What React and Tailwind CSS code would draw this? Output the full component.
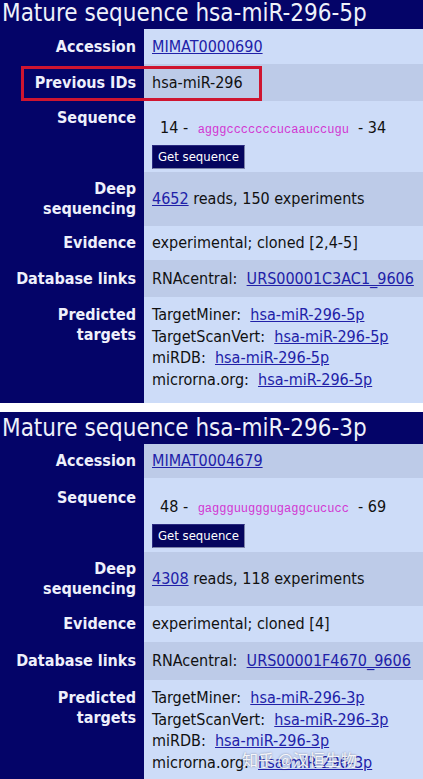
import React from "react";

const NAVY = "bg-[#040468]";

const Row = ({ label, dark, children, labelClass = "pt-2", valueClass = "py-2 items-center", boxed }) => {
  return (
    <div className="relative flex">
      <div className={`${NAVY} w-[144px] shrink-0 pr-2 text-right font-bold text-[#eef0fb] leading-[20px] ${labelClass}`}>
        {label}
      </div>
      <div className={`flex flex-1 pl-2 text-[#111] leading-[20px] ${dark ? "bg-[#bdcbe8]" : "bg-[#cddcf8]"} ${valueClass}`}>
        <div>{children}</div>
      </div>
      {boxed && (
        <div className="pointer-events-none absolute left-[21px] top-[2px] h-[35px] w-[241px] border-[3px] border-[#cf1530]" />
      )}
    </div>
  );
};

const A = ({ children }) => <a className="text-[#2121a8] underline">{children}</a>;

const SeqBlock = ({ start, seq, end }) => (
  <div className="flex flex-col items-start">
    <div className="pl-2 leading-[20px]">
      {start} -&nbsp;
      <span className="ml-[5px] font-['Liberation_Mono','Courier_New',monospace] text-[12px] text-[#d236d2]">{seq}</span>
      &nbsp; - {end}
    </div>
    <button className="mt-[5px] h-[24px] border border-[#7b82a8] border-t-[#2a2a80] border-l-[#2a2a80] bg-[#05055e] px-[5px] text-[13px] text-white leading-[20px]">
      Get sequence
    </button>
  </div>
);

const Targets = ({ name }) => (
  <div className="leading-[21.7px]">
    <div>TargetMiner:&nbsp; <A>{name}</A></div>
    <div>TargetScanVert:&nbsp; <A>{name}</A></div>
    <div>miRDB:&nbsp; <A>{name}</A></div>
    <div>microrna.org:&nbsp; <A>{name}</A></div>
  </div>
);

const Title = ({ children, className = "" }) => (
  <div className={`${NAVY} pl-[2px] text-[24px] text-[#eef1fa] ${className}`}>{children}</div>
);

export default function App() {
  return (
    <div className="relative h-[779px] w-[423px] overflow-hidden bg-white font-['DejaVu_Sans_Condensed','DejaVu_Sans',sans-serif] text-[16px]">
      <Title className="h-[29px] leading-[27px]">Mature sequence hsa-miR-296-5p</Title>
      <Row label="Accession" valueClass="py-[7.5px] items-center" labelClass="py-[7.5px]">
        <A>MIMAT0000690</A>
      </Row>
      <Row label="Previous IDs" dark boxed valueClass="py-[8.5px] items-center" labelClass="py-[8.5px]">
        hsa-miR-296
      </Row>
      <Row label="Sequence" labelClass="pt-[7px]" valueClass="pt-[17px] pb-[3px]">
        <SeqBlock start="14" seq="agggcccccccucaauccugu" end="34" />
      </Row>
      <Row label={<>Deep<br />sequencing</>} dark labelClass="py-[7px]" valueClass="items-center">
        <A>4652</A> reads, 150 experiments
      </Row>
      <Row label="Evidence" labelClass="py-[7px]" valueClass="items-center">
        experimental; cloned [2,4-5]
      </Row>
      <Row label="Database links" dark labelClass="py-[8.5px]" valueClass="items-center">
        RNAcentral:&nbsp; <A>URS00001C3AC1_9606</A>
      </Row>
      <Row label={<>Predicted<br />targets</>} labelClass="pt-[8px]" valueClass="pt-[7px] pb-[12px]">
        <Targets name="hsa-miR-296-5p" />
      </Row>

      <div className="h-[9px]" />

      <Title className="h-[32px] leading-[32px]">Mature sequence hsa-miR-296-3p</Title>
      <Row label="Accession" dark valueClass="py-[7px] items-center" labelClass="py-[7px]">
        <A>MIMAT0004679</A>
      </Row>
      <Row label="Sequence" labelClass="pt-[10px]" valueClass="pt-[19px] pb-[4px]">
        <SeqBlock start="48" seq="gaggguugggugaggcucucc" end="69" />
      </Row>
      <Row label={<>Deep<br />sequencing</>} dark labelClass="py-[7px]" valueClass="items-center">
        <A>4308</A> reads, 118 experiments
      </Row>
      <Row label="Evidence" labelClass="py-[8px]" valueClass="items-center">
        experimental; cloned [4]
      </Row>
      <Row label="Database links" dark labelClass="py-[9px]" valueClass="items-center">
        RNAcentral:&nbsp; <A>URS00001F4670_9606</A>
      </Row>
      <Row label={<>Predicted<br />targets</>} labelClass="pt-[8px]" valueClass="pt-[7px] pb-[12px]">
        <Targets name="hsa-miR-296-3p" />
      </Row>

      <div className="pointer-events-none absolute left-[242px] top-[747px] text-[16px] text-white/90 font-['Noto_Sans_CJK_SC',sans-serif] [text-shadow:0_0_2px_rgba(60,60,90,0.6)]">
        知乎 @汉恒生物
      </div>
    </div>
  );
}
